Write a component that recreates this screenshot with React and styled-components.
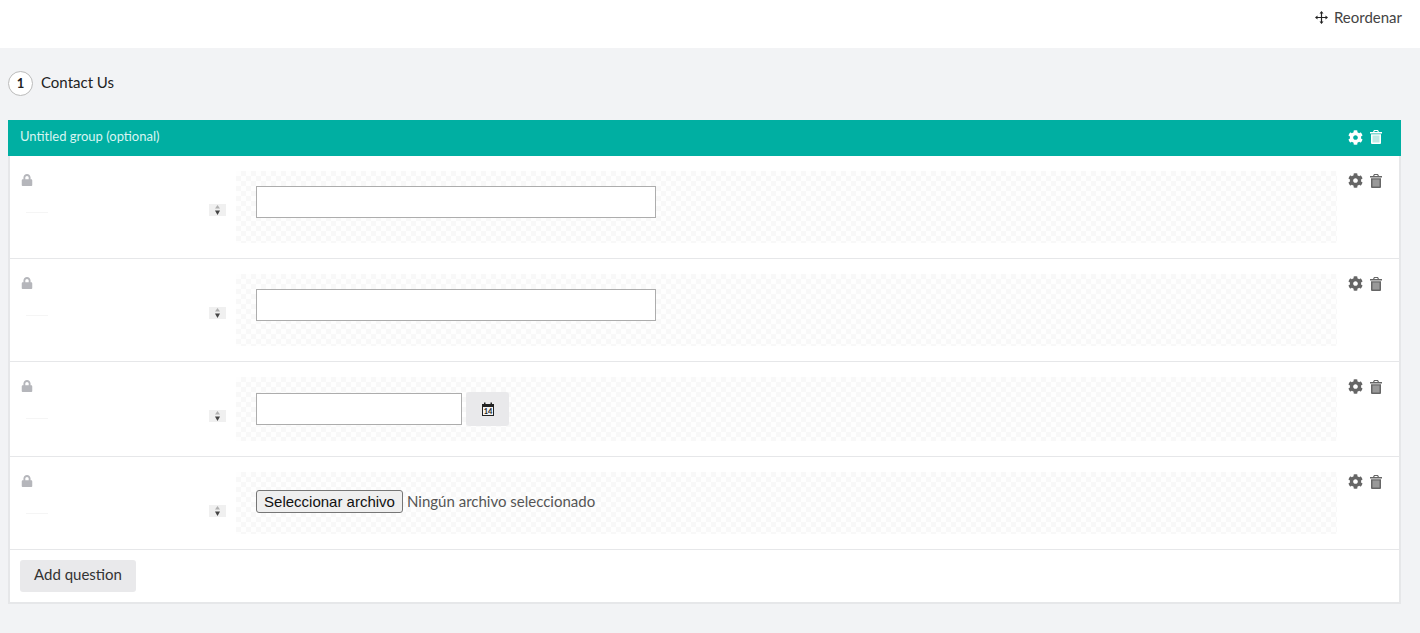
import React from "react";
import styled, { createGlobalStyle } from "styled-components";
import { FaCog, FaLock } from "react-icons/fa";

const GlobalStyle = createGlobalStyle`
  * {
    box-sizing: border-box;
  }

  body {
    margin: 0;
    background: #f2f3f5;
    color: #333;
    font-family: Lato, "Open Sans", sans-serif;
  }
`;

const TopBar = styled.div`
  display: flex;
  justify-content: flex-end;
  align-items: flex-start;

  height: 48px;
  padding: 7px 18px 0 0;
  background: #fff;
`;

const ReorderLink = styled.div`
  display: flex;
  align-items: center;
  column-gap: 6px;

  font-size: 15px;
  line-height: 20px;
  color: #444;
`;

const Page = styled.div`
  width: 1393px;
  margin-left: 8px;
`;

const GroupTitle = styled.div`
  display: flex;
  align-items: center;
  column-gap: 8px;

  height: 72px;
  padding-bottom: 2px;
  font-size: 15px;
  color: #222;
`;

const StepLabel = styled.span`
  margin-top: -2px;
`;

const Step = styled.div`
  display: flex;
  justify-content: center;
  align-items: center;

  width: 25px;
  height: 25px;
  border: 1px solid #bbb;
  border-radius: 50%;
  background: #fff;
  font-size: 13px;
  font-weight: 700;
`;

const GroupHeader = styled.div`
  display: flex;
  justify-content: space-between;
  align-items: center;

  height: 36px;
  padding: 0 19px 2px 12px;
  background: #00afa2;
  color: #d8f5f2;
  font-size: 13px;
`;

const GroupName = styled.span`
  margin-top: -2px;
`;

const Actions = styled.div`
  display: flex;
  align-items: center;
  column-gap: 7px;

  color: ${({ $light }) => ($light ? "#fff" : "#666")};
`;

const Panel = styled.div`
  background: #fff;
  border: solid #e6e7e9;
  border-width: 0 2px 2px;
`;

const Row = styled.div`
  display: flex;
  align-items: flex-start;

  padding: 15px 16px 15px 0;
  border-bottom: 1px solid #e6e7e9;
`;

const RowSide = styled.div`
  position: relative;
  flex: 0 0 226px;
  height: 100%;
  padding: 3px 0 0 11px;
  color: #b5b6bb;
  line-height: 0;
`;

const HiddenLabel = styled.div`
  position: absolute;
  top: ${({ $top }) => $top + 8}px;
  left: 16px;

  width: 22px;
  height: 1px;
  background: #f5f5f5;
`;

const TypeSelect = styled.div`
  position: absolute;
  top: ${({ $top }) => $top}px;
  right: 10px;

  display: flex;
  justify-content: center;
  align-items: center;

  width: 17px;
  height: 12px;
  background: #f0f0f0;
`;

const Preview = styled.div`
  display: flex;
  align-items: flex-start;
  column-gap: 4px;

  flex: 0 0 1101px;
  height: ${({ $height }) => $height}px;
  padding: ${({ $pad }) => $pad}px 20px;
  background-color: #fefefe;
  background-image: conic-gradient(
    #f8f8f8 25%,
    transparent 25% 50%,
    #f8f8f8 50% 75%,
    transparent 75%
  );
  background-size: 10px 10px;
`;

const RowActions = styled(Actions)`
  margin-left: 11px;
  padding-top: 2px;
`;

const TextInput = styled.div`
  width: ${({ $width }) => $width}px;
  height: 32px;
  border: 1px solid #adadad;
  background: #fff;
`;

const CalendarButton = styled.div`
  display: flex;
  justify-content: center;
  align-items: center;

  width: 43px;
  height: 34px;
  margin-top: -1px;
  border-radius: 3px;
  background: #e9e9eb;
`;

const FileButton = styled.div`
  display: flex;
  justify-content: center;
  align-items: center;

  width: 147px;
  height: 23px;
  border: 1px solid #767676;
  border-radius: 3px;
  background: #efefef;
  color: #111;
  font-family: "Liberation Sans", Arial, sans-serif;
  font-size: 15px;
`;

const FileLabel = styled.span`
  line-height: 23px;
  font-size: 15px;
  color: #555;
`;

const Footer = styled.div`
  height: 52px;
  padding: 10px;
`;

const AddButton = styled.div`
  display: flex;
  justify-content: center;
  align-items: center;

  width: 116px;
  height: 32px;
  padding-bottom: 5px;
  border-radius: 3px;
  background: #e9e9eb;
  color: #333;
  font-size: 15px;
`;

const MoveIcon = () => (
  <svg width="13" height="13" viewBox="0 0 13 13" fill="#222">
    <path d="M5.900 2h1.200v9H5.900zM1.500 5.900H11.500v1.200H1.500z" />
    <path d="M6.500 0 8.500 2.500h-4zM6.500 13l-2-2.500h4zM0 6.500 2.500 4.500v4zM13 6.500l-2.500 2v-4z" />
  </svg>
);

const TrashIcon = ({ fade }) => (
  <svg width="12" height="14" viewBox="0 0 12 14" fill="currentColor">
    <path d="M4 0h4l1 2h3v1.500H0V2h3zM4.700 1l-.4 1h3.400l-.4-1z" />
    <path d="M1 4.300h10V13a1 1 0 0 1-1 1H2a1 1 0 0 1-1-1z" />
    <rect x="2.500" y="5.500" width="7" height="7" fill={fade} />
  </svg>
);

const CalendarIcon = () => (
  <svg width="14" height="14" viewBox="0 0 14 14">
    <path fill="#222" d="M1 2h2V.5h1.500V2h5V.5H11V2h2v12H1z" />
    <rect x="2" y="5" width="10" height="8" fill="#f4f4f4" />
    <text x="7" y="12" fontSize="7.500" fontWeight="700" fontFamily="Lato" textAnchor="middle" fill="#222">
      14
    </text>
  </svg>
);

const SelectIcon = () => (
  <svg width="7" height="10" viewBox="0 0 7 10">
    <path d="M3.500 0 6 3.500H1z" fill="#b0b0b0" />
    <path d="M3.500 10 1 5.500h5z" fill="#444" />
  </svg>
);

const rows = [
  { height: 72, selectTop: 33, pad: 15, input: <TextInput $width={400} /> },
  { height: 72, selectTop: 33, pad: 15, input: <TextInput $width={400} /> },
  {
    height: 64,
    selectTop: 33,
    pad: 16,
    input: (
      <>
        <TextInput $width={206} />
        <CalendarButton>
          <CalendarIcon />
        </CalendarButton>
      </>
    ),
  },
  {
    height: 62,
    selectTop: 33,
    pad: 18,
    input: (
      <>
        <FileButton>Seleccionar archivo</FileButton>
        <FileLabel>Ningún archivo seleccionado</FileLabel>
      </>
    ),
  },
];

const App = () => {
  const renderedRows = rows.map((row, i) => {
    return (
      <Row key={i}>
        <RowSide>
          <FaLock size={12} />
          <HiddenLabel $top={row.selectTop} />
          <TypeSelect $top={row.selectTop}>
            <SelectIcon />
          </TypeSelect>
        </RowSide>
        <Preview $height={row.height} $pad={row.pad}>
          {row.input}
        </Preview>
        <RowActions>
          <FaCog size={15} />
          <TrashIcon fade="#999" />
        </RowActions>
      </Row>
    );
  });

  return (
    <div>
      <GlobalStyle />
      <TopBar>
        <ReorderLink>
          <MoveIcon />
          Reordenar
        </ReorderLink>
      </TopBar>
      <Page>
        <GroupTitle>
          <Step>1</Step>
          <StepLabel>Contact Us</StepLabel>
        </GroupTitle>
        <GroupHeader>
          <GroupName>Untitled group (optional)</GroupName>
          <Actions $light>
            <FaCog size={15} />
            <TrashIcon fade="#bfe9e5" />
          </Actions>
        </GroupHeader>
        <Panel>
          {renderedRows}
          <Footer>
            <AddButton>Add question</AddButton>
          </Footer>
        </Panel>
      </Page>
    </div>
  );
};

export default App;
